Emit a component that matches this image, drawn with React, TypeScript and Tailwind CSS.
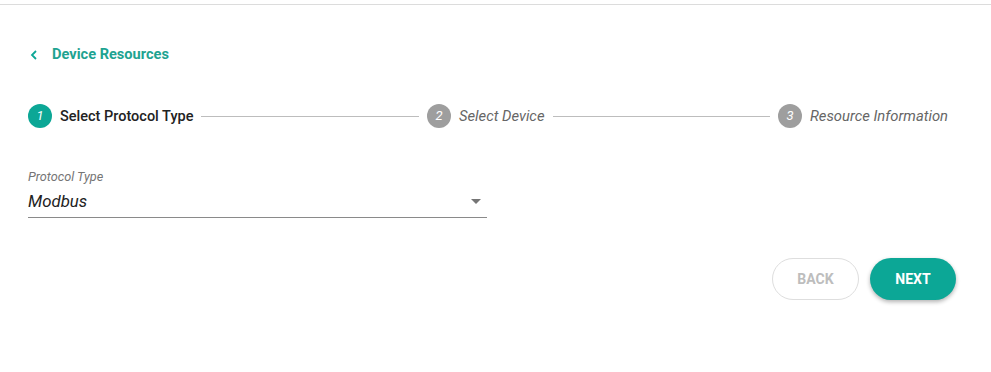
import React from "react";

export default function App() {
  const teal = "#0ca796";
  return (
    <div className="w-[991px] h-[372px] bg-white" style={{ fontFamily: "Roboto, 'Liberation Sans', sans-serif" }}>
      <div className="h-[5px] border-b border-[#dcdcdc]" />
      <div className="pl-[28px] pr-[43px]">
        <div className="mt-[40px] flex items-center h-[20px]">
          <svg width="10" height="12" viewBox="0 0 10 12" className="ml-[1px]">
            <path d="M7 2 L3 6 L7 10" fill="none" stroke={teal} strokeWidth="1.8" />
          </svg>
          <span className="ml-[13px] text-[14.6px] font-bold text-[#1ea391]">Device Resources</span>
        </div>

        <div className="mt-[39px] flex items-center h-[24px]">
          <div className="w-[24px] h-[24px] rounded-full bg-[#0ca796] text-white text-[13px] italic flex items-center justify-center">1</div>
          <span className="ml-[8px] text-[14.5px] font-medium text-[#222] pt-[1px]">Select Protocol Type</span>
          <div className="flex-1 h-px bg-[#bdbdbd] mx-[8px]" />
          <div className="w-[24px] h-[24px] rounded-full bg-[#9e9e9e] text-white text-[13px] italic flex items-center justify-center">2</div>
          <span className="ml-[8px] text-[14.8px] italic text-[#666] pt-[1px]">Select Device</span>
          <div className="flex-1 h-px bg-[#bdbdbd] mx-[8px]" />
          <div className="w-[24px] h-[24px] rounded-full bg-[#9e9e9e] text-white text-[13px] italic flex items-center justify-center">3</div>
          <span className="ml-[8px] text-[14.8px] italic text-[#666] pt-[1px]">Resource Information</span>
        </div>

        <div className="mt-[41px] w-[459px]">
          <div className="text-[12.7px] italic text-[#757575] leading-[16px]">Protocol Type</div>
          <div className="mt-[4px] flex items-center justify-between border-b border-[#8a8a8a] h-[29px] pb-[4px]">
            <span className="text-[16.8px] italic text-[#222] leading-[24px]">Modbus</span>
            <svg width="10" height="5" viewBox="0 0 10 5" className="mr-[6px]">
              <path d="M0 0 L10 0 L5 5 Z" fill="#757575" />
            </svg>
          </div>
        </div>

        <div className="mt-[40px] flex justify-end gap-[11px] mr-[-8px]">
          <button className="w-[87px] h-[42px] rounded-full border border-[#dedede] bg-white text-[14px] font-bold text-[#bdbdbd]">BACK</button>
          <button className="w-[86px] h-[42px] rounded-full bg-[#0ca796] text-[14px] font-bold text-white shadow-[0_2px_4px_rgba(0,0,0,0.3)]">NEXT</button>
        </div>
      </div>
    </div>
  );
}
